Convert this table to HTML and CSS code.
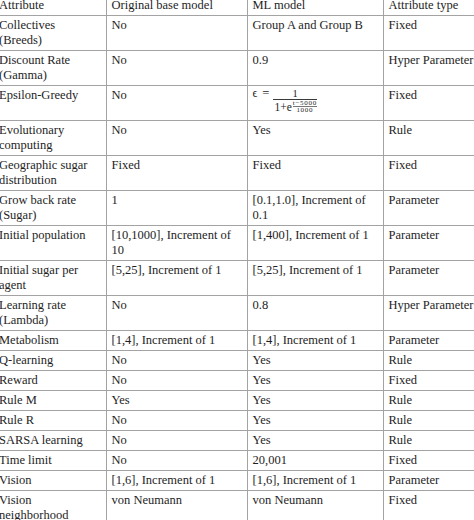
FILE: index.html
```html
<!DOCTYPE html>
<html>
<head>
<meta charset="utf-8">
<link rel="stylesheet" href="styles.css">
</head>
<body>
<table class="grid">
  <colgroup>
    <col class="c1"><col class="c2"><col class="c3"><col class="c4">
  </colgroup>
  <thead>
    <tr><th>Attribute</th><th>Original base model</th><th>ML model</th><th>Attribute type</th></tr>
  </thead>
  <tbody>
    <tr><td>Collectives (Breeds)</td><td>No</td><td>Group A and Group B</td><td>Fixed</td></tr>
    <tr><td>Discount Rate (Gamma)</td><td>No</td><td>0.9</td><td>Hyper Parameter</td></tr>
    <tr><td>Epsilon-Greedy</td><td>No</td><td>
      <div class="eq">
        <span class="lhs">ϵ</span><span class="eqsign">=</span>
        <span class="frac">
          <span class="num">1</span>
          <span class="den"><span class="base">1+e</span><span class="sfrac"><span class="snum">t−5000</span><span class="sden">1000</span></span></span>
        </span>
      </div>
    </td><td>Fixed</td></tr>
    <tr><td>Evolutionary computing</td><td>No</td><td>Yes</td><td>Rule</td></tr>
    <tr><td>Geographic sugar distribution</td><td>Fixed</td><td>Fixed</td><td>Fixed</td></tr>
    <tr><td>Grow back rate (Sugar)</td><td>1</td><td>[0.1,1.0], Increment of 0.1</td><td>Parameter</td></tr>
    <tr><td>Initial population</td><td>[10,1000], Increment of 10</td><td>[1,400], Increment of 1</td><td>Parameter</td></tr>
    <tr><td>Initial sugar per agent</td><td>[5,25], Increment of 1</td><td>[5,25], Increment of 1</td><td>Parameter</td></tr>
    <tr><td>Learning rate (Lambda)</td><td>No</td><td>0.8</td><td>Hyper Parameter</td></tr>
    <tr><td>Metabolism</td><td>[1,4], Increment of 1</td><td>[1,4], Increment of 1</td><td>Parameter</td></tr>
    <tr><td>Q-learning</td><td>No</td><td>Yes</td><td>Rule</td></tr>
    <tr><td>Reward</td><td>No</td><td>Yes</td><td>Fixed</td></tr>
    <tr><td>Rule M</td><td>Yes</td><td>Yes</td><td>Rule</td></tr>
    <tr><td>Rule R</td><td>No</td><td>Yes</td><td>Rule</td></tr>
    <tr><td>SARSA learning</td><td>No</td><td>Yes</td><td>Rule</td></tr>
    <tr><td>Time limit</td><td>No</td><td>20,001</td><td>Fixed</td></tr>
    <tr><td>Vision</td><td>[1,6], Increment of 1</td><td>[1,6], Increment of 1</td><td>Parameter</td></tr>
    <tr><td>Vision neighborhood</td><td>von Neumann</td><td>von Neumann</td><td>Fixed</td></tr>
  </tbody>
</table>
</body>
</html>
```
FILE: styles.css
```css
html, body {
  margin: 0;
  padding: 0;
  background: #ffffff;
  overflow: hidden;
}

body {
  width: 474px;
  height: 520px;
  font-family: "Liberation Serif", "Times New Roman", serif;
  font-size: 12.5px;
  color: #1e1e1e;
}

.grid {
  border-collapse: collapse;
  table-layout: fixed;
  width: 499px;
  margin-left: -6px;
}

.c1 { width: 112px; }
.c2 { width: 141px; }
.c3 { width: 136px; }
.c4 { width: 110px; }

.grid th,
.grid td {
  border: 1px solid #a3a3a3;
  padding: 2px 7px 2px 5px;
  line-height: 15px;
  text-align: left;
  vertical-align: top;
  font-weight: normal;
  white-space: normal;
}

.grid th {
  border-top: none;
  line-height: 10px;
  padding-top: 0;
  padding-bottom: 5px;
}

.grid tr > :first-child {
  border-left: none;
}

.eq {
  display: flex;
  align-items: flex-start;
  height: 30px;
}

.lhs {
  margin-top: -2px;
  line-height: 15px;
  font-size: 12px;
}

.eqsign {
  margin: -2px 4px 0 5px;
  line-height: 15px;
}

.frac {
  display: flex;
  flex-direction: column;
  align-items: stretch;
  margin-top: 1px;
}

.num {
  font-size: 10.5px;
  line-height: 10px;
  text-align: center;
  border-bottom: 1px solid #3a3a3a;
}

.den {
  display: flex;
  align-items: flex-start;
  padding-left: 1px;
}

.base {
  font-size: 11.5px;
  line-height: 12px;
  padding-top: 1px;
}

.sfrac {
  display: flex;
  flex-direction: column;
  align-items: center;
  margin-left: 1px;
  font-size: 7px;
  line-height: 6px;
  letter-spacing: 0.7px;
}

.snum {
  border-bottom: 1px solid #777;
}

.sden {
  padding-top: 0;
}
```
